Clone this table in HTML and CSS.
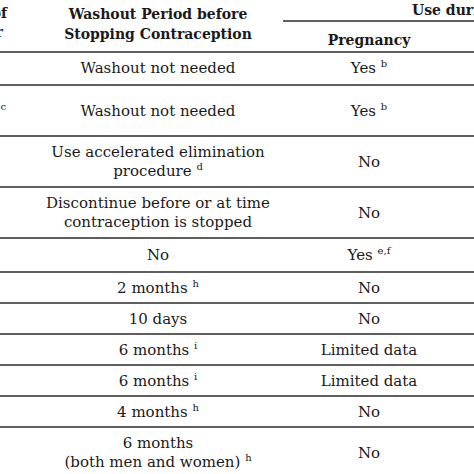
FILE: index.html
```html
<!DOCTYPE html>
<html lang="en">
<head>
<meta charset="utf-8">
<title>Washout table</title>
<link rel="stylesheet" href="styles.css">
</head>
<body>
<div class="page">
  <table class="t">
    <colgroup>
      <col class="c1"><col class="c2"><col class="c3"><col class="c4">
    </colgroup>
    <thead>
      <tr>
        <th rowspan="2" class="h1"><span class="l1">Contraception Use of</span><span class="l2">Partner</span></th>
        <th rowspan="2" class="h2">Washout Period before<br>Stopping Contraception</th>
        <th colspan="2" class="hu"><div class="use">Use during Pregnancy and Lactation</div></th>
      </tr>
      <tr>
        <th class="hp">Pregnancy</th>
        <th class="hp">Lactation</th>
      </tr>
    </thead>
    <tbody>
      <tr class="m"><td class="a">Not required</td><td>Washout not needed</td><td>Yes <sup>b</sup></td><td>Yes</td></tr>
      <tr><td class="a vis">Not required <sup>c</sup></td><td>Washout not needed</td><td>Yes <sup>b</sup></td><td>Yes<br>with caution</td></tr>
      <tr><td class="a">Required</td><td>Use accelerated elimination<br>procedure <sup>d</sup></td><td>No</td><td>No</td></tr>
      <tr><td class="a">Required</td><td>Discontinue before or at time<br>contraception is stopped</td><td>No</td><td>No</td></tr>
      <tr class="s"><td class="a">Not required</td><td>No</td><td>Yes <sup>e,f</sup></td><td>Yes</td></tr>
      <tr class="n"><td class="a">Required</td><td>2 months <sup>h</sup></td><td>No</td><td>No</td></tr>
      <tr class="n"><td class="a">Required</td><td>10 days</td><td>No</td><td>No</td></tr>
      <tr class="n"><td class="a">Required</td><td>6 months <sup>i</sup></td><td>Limited data</td><td>No</td></tr>
      <tr class="n"><td class="a">Required</td><td>6 months <sup>i</sup></td><td>Limited data</td><td>No</td></tr>
      <tr class="n"><td class="a">Required</td><td>4 months <sup>h</sup></td><td>No</td><td>No</td></tr>
      <tr><td class="a">Required</td><td>6 months<br>(both men and women) <sup>h</sup></td><td>No</td><td>No</td></tr>
    </tbody>
  </table>
</div>
</body>
</html>
```

FILE: styles.css
```css
html, body {
  margin: 0;
  padding: 0;
  background: #ffffff;
}

.page {
  width: 474px;
  height: 474px;
  overflow: hidden;
  font-family: "DejaVu Serif", "Liberation Serif", serif;
  font-size: 15px;
  color: #1a1a1a;
}

.t {
  margin-left: -200px;
  border-collapse: separate;
  border-spacing: 0;
  table-layout: fixed;
  width: 866px;
  line-height: 19px;
}

.c1 { width: 244px; }
.c2 { width: 228px; }
.c3 { width: 194px; }
.c4 { width: 200px; }

th {
  font-weight: bold;
  font-size: 14px;
  padding: 0;
  text-align: center;
}

.h1 {
  text-align: right;
  vertical-align: top;
  padding: 4px 37px 0 0;
  border-bottom: 2px solid #5f5f5f;
}

.h1 .l1,
.h1 .l2 {
  display: block;
  white-space: nowrap;
}

.h1 .l2 {
  margin-right: 4px;
}

.h2 {
  vertical-align: top;
  padding: 4px 0 0 0;
  line-height: 20px;
  border-bottom: 2px solid #5f5f5f;
}

.hu {
  text-align: left;
  vertical-align: top;
  height: 22px;
}

.use {
  margin-left: 11px;
  padding-left: 129px;
  height: 20px;
  line-height: 20px;
  white-space: nowrap;
  border-bottom: 2px solid #5f5f5f;
}

.hp {
  padding: 8px 0 1px 0;
  line-height: 20px;
  border-bottom: 2px solid #5f5f5f;
}

td {
  text-align: center;
  vertical-align: middle;
  padding: 6px 0 5px 0;
  border-bottom: 2px solid #5f5f5f;
  white-space: nowrap;
}

.m td {
  padding: 6px 0 6px 0;
}

.s td {
  padding: 7px 0 6px 0;
}

.n td {
  padding: 6px 0 4px 0;
}

td.a {
  text-align: right;
  padding-right: 48px;
}

td.vis {
  padding-right: 38px;
}

sup {
  font-size: 10px;
  line-height: 0;
  vertical-align: 6px;
}
```
